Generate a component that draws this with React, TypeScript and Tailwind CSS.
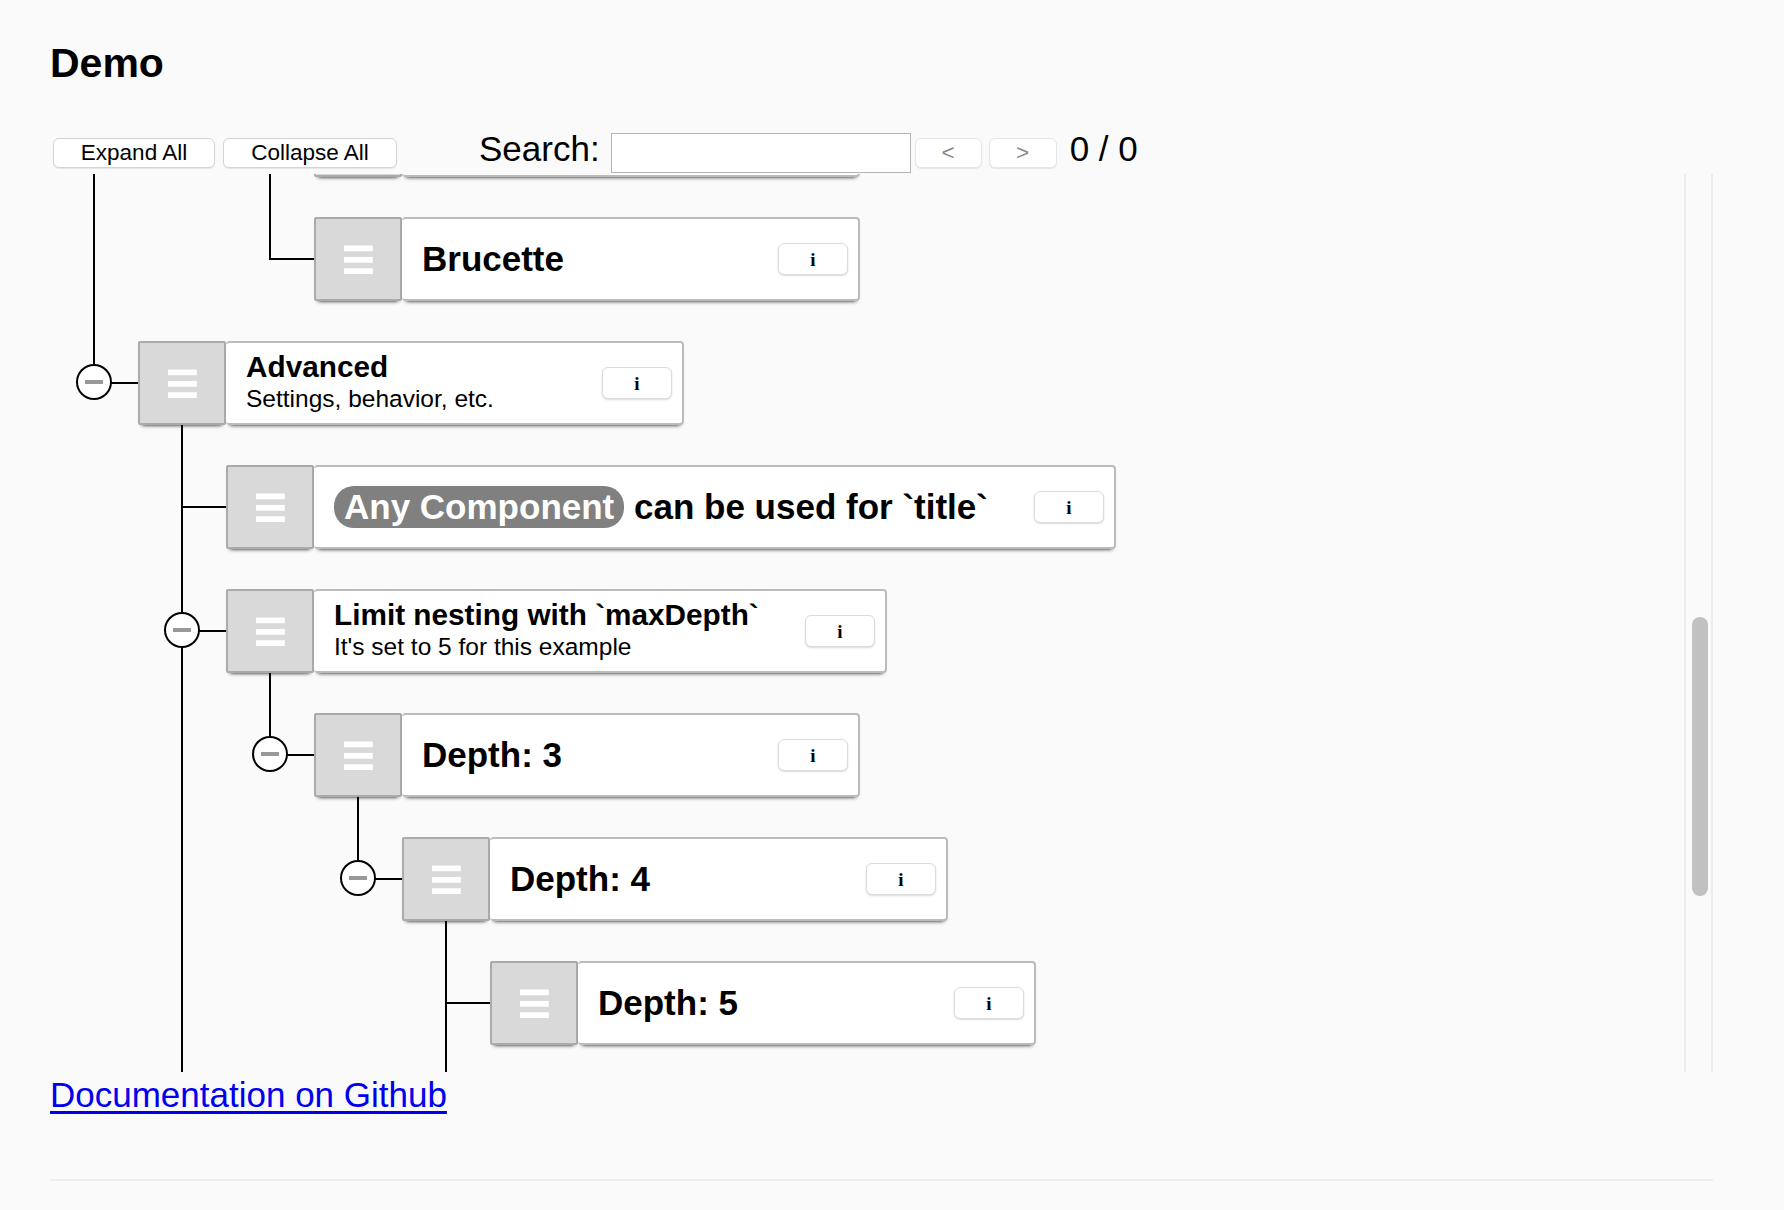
import React from "react";

type Line = "none" | "full" | "last" | "mid";

interface RowData {
  lines: Line[];
  toggle?: boolean;
  expanded?: boolean;
  title: React.ReactNode;
  subtitle?: string;
}

const ROWS: RowData[] = [
  { lines: ["full", "none", "mid"], title: "Bruce Jr." },
  { lines: ["full", "none", "last"], title: "Brucette" },
  { lines: ["last"], toggle: true, expanded: true, title: "Advanced", subtitle: "Settings, behavior, etc." },
  {
    lines: ["none", "mid"],
    title: (
      <>
        <span className="inline-block rounded-[20px] bg-[#808080] px-[10px] leading-[42px] text-white">Any Component</span>
        {"\u00a0can be used for `title`"}
      </>
    ),
  },
  {
    lines: ["none", "mid"],
    toggle: true,
    expanded: true,
    title: "Limit nesting with `maxDepth`",
    subtitle: "It's set to 5 for this example",
  },
  { lines: ["none", "full", "last"], toggle: true, expanded: true, title: "Depth: 3" },
  { lines: ["none", "full", "none", "last"], toggle: true, expanded: true, title: "Depth: 4" },
  { lines: ["none", "full", "none", "none", "mid"], title: "Depth: 5" },
  { lines: ["none", "full", "none", "none", "last"], title: "This cannot be dragged deeper" },
];

function Block({ line, toggle }: { line: Line; toggle?: boolean }) {
  return (
    <div className="relative h-[124px] w-[88px] shrink-0">
      {line !== "none" && (
        <svg width="88" height="124" viewBox="0 0 88 124" className="block">
          {(line === "full" || line === "mid") && <rect x="43" y="0" width="2" height="124" fill="#000" />}
          {line === "last" && <rect x="43" y="0" width="2" height="63" fill="#000" />}
          {(line === "last" || line === "mid") && <rect x="44" y="61" width="44" height="2" fill="#000" />}
        </svg>
      )}
      {toggle && (
        <button
          type="button"
          className="absolute left-[28px] top-[45px] flex h-[32px] w-[32px] items-center justify-center rounded-full bg-white shadow-[0_0_0_2px_#000]"
        >
          <span className="block h-[4px] w-[18px] bg-[#989898]" />
        </button>
      )}
    </div>
  );
}

function Hamburger() {
  return (
    <svg width="84" height="80" viewBox="0 1 42 40">
      <g stroke="#fff" strokeWidth="2.9">
        <path d="M14 15.7h14.4M14 21.4h14.4M14 27.1h14.4" />
      </g>
    </svg>
  );
}

function TreeRow({ row }: { row: RowData }) {
  const last = row.lines.length - 1;
  return (
    <div className="flex h-[124px]">
      {row.lines.map((l, i) => (
        <Block key={i} line={l} toggle={i === last && row.toggle} />
      ))}
      <div className="flex h-[124px] flex-col">
        <div className="h-[20px]" />
        <div className="flex h-[84px]">
          <div className="flex h-full w-[88px] shrink-0 items-center justify-center rounded-[2px] border-2 border-[#aaaaaa] bg-[#d9d9d9] shadow-[0_4px_4px_-4px_#000]">
            <Hamburger />
          </div>
          <div className="flex h-full min-w-[458px] items-center justify-between whitespace-nowrap rounded-[4px] border-2 border-l-0 border-[#bbbbbb] bg-white pl-[20px] pr-[10px] shadow-[0_4px_4px_-4px_#000]">
            <div className="pr-[46px]">
              {row.subtitle ? (
                <div className="-mt-[3px]">
                  <div className="text-[29.75px] font-bold leading-[30px]">{row.title}</div>
                  <div className="mt-[4px] text-[24.5px] leading-[25px]">{row.subtitle}</div>
                </div>
              ) : (
                <div className="font-bold leading-[42px]">{row.title}</div>
              )}
            </div>
            <button
              type="button"
              className="flex h-[32px] w-[70px] shrink-0 items-center justify-center rounded-[6px] border border-[#dcdcdc] bg-white font-['Liberation_Serif',serif] text-[19px] font-bold leading-none shadow-[0_1px_2px_rgba(0,0,0,0.15)]"
            >
              i
            </button>
          </div>
        </div>
        <div className="h-[20px] w-[88px]">
          {row.expanded && <div className="mx-auto h-full w-[2px] bg-black" />}
        </div>
      </div>
    </div>
  );
}

const btn =
  "h-[30px] rounded-[6px] border border-[#d4d4d4] bg-white text-[22.5px] leading-none shadow-[0_1px_1px_rgba(0,0,0,0.08)]";

export default function App() {
  return (
    <div className="min-h-screen bg-[#fafafa] font-['Liberation_Sans',Arial,sans-serif] text-[35px] text-black">
      <div className="pl-[50px] pr-[71px]">
        <h2 className="pt-[40px] text-[41px] font-bold leading-[47px]">Demo</h2>

        {/* Toolbar */}
        <div className="mt-[45px] flex h-[42px] items-center">
          <button type="button" className={`${btn} ml-[3px] w-[162px]`}>
            Expand All
          </button>
          <button type="button" className={`${btn} ml-[8px] w-[174px]`}>
            Collapse All
          </button>
          <span className="ml-[82px] pb-[8px] leading-[40px]">Search:</span>
          <input
            type="text"
            className="ml-[11px] h-[40px] w-[300px] border border-[#b5b5b5] bg-white outline-none"
          />
          <button type="button" className={`${btn} ml-[4px] w-[67px] border-[#e6e6e6] text-[#8a8a8a]`}>
            &lt;
          </button>
          <button type="button" className={`${btn} ml-[7px] w-[68px] border-[#e6e6e6] text-[#8a8a8a]`}>
            &gt;
          </button>
          <span className="ml-[13px] pb-[8px] leading-[40px]">0 / 0</span>
        </div>

        {/* Tree */}
        <div className="flex h-[898px]">
          <div className="h-full flex-1 overflow-hidden">
            <div className="-mt-[101px]">
              {ROWS.map((r, i) => (
                <TreeRow key={i} row={r} />
              ))}
            </div>
          </div>
          <div className="h-full w-[29px] border-x-2 border-[#ececec] pl-[6px]">
            <div className="mt-[443px] h-[279px] w-[16px] rounded-full bg-[#c1c1c1]" />
          </div>
        </div>

        <a href="#" className="block w-fit leading-[46px] text-[#0000ee] underline decoration-[3px] underline-offset-[4px]">
          Documentation on Github
        </a>

        <div className="mt-[61px] h-[2px] bg-[#eeeeee]" />
      </div>
    </div>
  );
}
